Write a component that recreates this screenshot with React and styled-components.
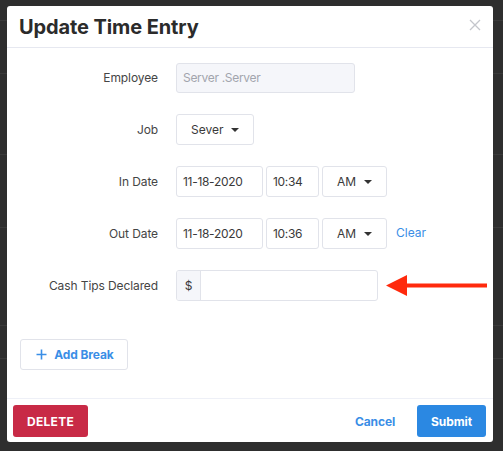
import React from 'react';
import styled, { createGlobalStyle } from 'styled-components';

const GlobalStyle = createGlobalStyle`
  html, body {
    margin: 0;
    padding: 0;
    background: #2e2e2e;
  }
  body {
    font-family: Inter, "Noto Sans", sans-serif;
    -webkit-font-smoothing: antialiased;
  }
`;

const blue = '#3a8ee6';

// the dark overlay with the faint table rows of the page behind it
const Backdrop = styled.div`
  width: 503px;
  height: 451px;
  box-sizing: border-box;
  padding: 6px 10px 0 7px;
  background-color: #2e2e2e;
  background-image:
    linear-gradient(#3a3a3a, #3a3a3a),
    linear-gradient(#3a3a3a, #3a3a3a),
    linear-gradient(#3a3a3a, #3a3a3a),
    linear-gradient(#3a3a3a, #3a3a3a),
    linear-gradient(#3a3a3a, #3a3a3a),
    linear-gradient(#3a3a3a, #3a3a3a);
  background-size: 100% 1px;
  background-repeat: no-repeat;
  background-position: 0 20px, 0 73px, 0 154px, 0 227px, 0 325px, 0 358px;
`;

const Modal = styled.div`
  width: 486px;
  height: 436px;
  background: #fff;
  border-radius: 3px;
  display: flex;
  flex-direction: column;
  overflow: hidden;
`;

const Header = styled.div`
  height: 41px;
  display: flex;
  align-items: center;
  justify-content: space-between;
  padding: 0 12px 0 12px;
  border-bottom: 1px solid #e6e8f0;
`;

const Title = styled.h1`
  margin: 0;
  margin-top: 1px;
  font-size: 20px;
  font-weight: 700;
  color: #2b2b2b;
  letter-spacing: -0.1px;
`;

const Close = styled.button`
  border: 0;
  background: none;
  padding: 0;
  margin-top: -3px;
  width: 12px;
  height: 12px;
  display: flex;
  cursor: pointer;
`;

const Body = styled.div`
  flex: 1;
  padding: 14px 13px 0 13px;
  display: flex;
  flex-direction: column;
`;

const Form = styled.div`
  display: grid;
  grid-template-columns: 138px 1fr;
  column-gap: 18px;
  row-gap: 21px;
  align-items: center;
`;

const Label = styled.div`
  text-align: right;
  font-size: 12px;
  letter-spacing: -0.1px;
  color: #454545;
`;

const Controls = styled.div`
  display: flex;
  align-items: center;
  gap: 3px;
  height: 31px;
`;

const Field = styled.div`
  box-sizing: border-box;
  width: ${p => p.$w}px;
  height: ${p => p.$h || 31}px;
  border: 1px solid #e1e3ea;
  border-radius: 3px;
  background: ${p => (p.$disabled ? '#f5f6fa' : '#fff')};
  color: ${p => (p.$disabled ? '#a2a5ad' : '#3a3a3a')};
  font-size: 12px;
  letter-spacing: -0.3px;
  display: flex;
  align-items: center;
  padding: 0 6px;
`;

const Select = styled(Field)`
  justify-content: space-between;
  padding: 0 14px 0 14px;
  letter-spacing: 0;
`;

const Caret = styled.span`
  width: 0;
  height: 0;
  border-left: 4px solid transparent;
  border-right: 4px solid transparent;
  border-top: 4px solid #333;
`;

const ClearLink = styled.a`
  margin-left: 6px;
  margin-top: -2px;
  color: ${blue};
  font-size: 12px;
  text-decoration: none;
`;

const Group = styled.div`
  box-sizing: border-box;
  width: 202px;
  height: 31px;
  border: 1px solid #e1e3ea;
  border-radius: 3px;
  display: flex;
  overflow: hidden;
`;

const Addon = styled.div`
  width: 23px;
  background: #f5f6fa;
  border-right: 1px solid #e1e3ea;
  display: flex;
  align-items: center;
  justify-content: center;
  font-size: 12px;
  color: #3a3a3a;
`;

const TipsRow = styled.div`
  display: flex;
  align-items: center;
  gap: 8px;
`;

const Arrow = styled.svg`
  display: block;
`;

const AddBreak = styled.button`
  align-self: flex-start;
  margin-top: 38px;
  box-sizing: border-box;
  width: 108px;
  height: 31px;
  border: 1px solid #e1e3ea;
  border-radius: 3px;
  background: #fff;
  color: ${blue};
  font-family: inherit;
  font-size: 12px;
  font-weight: 700;
  letter-spacing: -0.1px;
  display: flex;
  align-items: center;
  justify-content: center;
  gap: 7px;
  padding: 0 0 0 2px;
`;

const Footer = styled.div`
  height: 37px;
  border-top: 1px solid #eef0f7;
  padding: 6px 7px 0 6px;
  display: flex;
  align-items: flex-start;
  gap: 22px;
`;

const Button = styled.button`
  box-sizing: border-box;
  height: 32px;
  width: ${p => p.$w}px;
  border: 0;
  border-radius: 3px;
  background: ${p => p.$bg || 'transparent'};
  color: ${p => p.$color || '#fff'};
  font-family: inherit;
  font-size: 12px;
  font-weight: 700;
  letter-spacing: ${p => (p.$caps ? '0.3px' : '-0.1px')};
  display: flex;
  align-items: center;
  justify-content: center;
  padding: 0;
`;

const Spacer = styled.div`
  flex: 1;
`;

function PlusIcon() {
  return (
    <svg width="11" height="11" viewBox="0 0 11 11">
      <path d="M5.5 0.5v10M0.5 5.5h10" stroke={blue} strokeWidth="1.6" />
    </svg>
  );
}

export default function App() {
  return (
    <>
      <GlobalStyle />
      <Backdrop>
        <Modal>
          <Header>
            <Title>Update Time Entry</Title>
            <Close aria-label="close">
              <svg width="12" height="12" viewBox="0 0 12 12">
                <path d="M1 1l10 10M11 1L1 11" stroke="#c4c6cc" strokeWidth="1.3" />
              </svg>
            </Close>
          </Header>

          <Body>
            <Form>
              <Label>Employee</Label>
              <Controls>
                <Field $w={179} $h={30} $disabled>Server .Server</Field>
              </Controls>

              <Label>Job</Label>
              <Controls>
                <Select $w={78}>Sever<Caret /></Select>
              </Controls>

              <Label>In Date</Label>
              <Controls>
                <Field $w={87}>11-18-2020</Field>
                <Field $w={53}>10:34</Field>
                <Select $w={65}>AM<Caret /></Select>
              </Controls>

              <Label>Out Date</Label>
              <Controls>
                <Field $w={87}>11-18-2020</Field>
                <Field $w={53}>10:36</Field>
                <Select $w={65}>AM<Caret /></Select>
                <ClearLink href="#">Clear</ClearLink>
              </Controls>

              <Label>Cash Tips Declared</Label>
              <TipsRow>
                <Group>
                  <Addon>$</Addon>
                </Group>
                <Arrow width="102" height="23" viewBox="0 0 102 23">
                  <path d="M0 11.5L21 1v8.5h80v4H21V22z" fill="#ff2a0d" />
                </Arrow>
              </TipsRow>
            </Form>

            <AddBreak>
              <PlusIcon />
              Add Break
            </AddBreak>
          </Body>

          <Footer>
            <Button $w={75} $bg="#c82a46" $caps>DELETE</Button>
            <Spacer />
            <Button $w={40} $color={blue}>Cancel</Button>
            <Button $w={69} $bg="#2b88e2">Submit</Button>
          </Footer>
        </Modal>
      </Backdrop>
    </>
  );
}
